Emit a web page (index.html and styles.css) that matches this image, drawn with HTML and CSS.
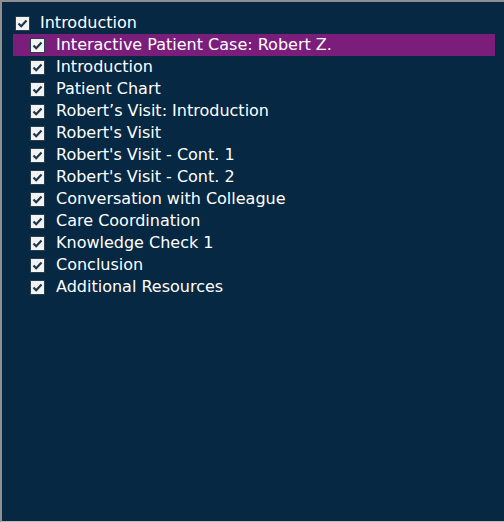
FILE: index.html
```html
<!DOCTYPE html>
<html>
<head>
<meta charset="utf-8">
<link rel="stylesheet" href="styles.css">
</head>
<body>
<div class="panel">
  <ul class="tree">
    <li class="node">
      <div class="row top">
        <span class="cb"><svg viewBox="0 0 15 15" width="15" height="15"><rect x="0.5" y="0.5" width="14" height="14" fill="#f3f3f3" stroke="#2b3e4c"/><path d="M3.5 7.5 L6.2 10.2 L11.5 4.6" fill="none" stroke="#1f3647" stroke-width="2.2"/></svg></span>
        <span class="label">Introduction</span>
      </div>
      <ul class="children">
        <li class="row child active"><span class="cb"><svg viewBox="0 0 15 15" width="15" height="15"><rect x="0.5" y="0.5" width="14" height="14" fill="#f3f3f3" stroke="#2b3e4c"/><path d="M3.5 7.5 L6.2 10.2 L11.5 4.6" fill="none" stroke="#1f3647" stroke-width="2.2"/></svg></span><span class="label">Interactive Patient Case: Robert Z.</span></li>
        <li class="row child"><span class="cb"><svg viewBox="0 0 15 15" width="15" height="15"><rect x="0.5" y="0.5" width="14" height="14" fill="#f3f3f3" stroke="#2b3e4c"/><path d="M3.5 7.5 L6.2 10.2 L11.5 4.6" fill="none" stroke="#1f3647" stroke-width="2.2"/></svg></span><span class="label">Introduction</span></li>
        <li class="row child"><span class="cb"><svg viewBox="0 0 15 15" width="15" height="15"><rect x="0.5" y="0.5" width="14" height="14" fill="#f3f3f3" stroke="#2b3e4c"/><path d="M3.5 7.5 L6.2 10.2 L11.5 4.6" fill="none" stroke="#1f3647" stroke-width="2.2"/></svg></span><span class="label">Patient Chart</span></li>
        <li class="row child"><span class="cb"><svg viewBox="0 0 15 15" width="15" height="15"><rect x="0.5" y="0.5" width="14" height="14" fill="#f3f3f3" stroke="#2b3e4c"/><path d="M3.5 7.5 L6.2 10.2 L11.5 4.6" fill="none" stroke="#1f3647" stroke-width="2.2"/></svg></span><span class="label">Robert’s Visit: Introduction</span></li>
        <li class="row child"><span class="cb"><svg viewBox="0 0 15 15" width="15" height="15"><rect x="0.5" y="0.5" width="14" height="14" fill="#f3f3f3" stroke="#2b3e4c"/><path d="M3.5 7.5 L6.2 10.2 L11.5 4.6" fill="none" stroke="#1f3647" stroke-width="2.2"/></svg></span><span class="label">Robert's Visit</span></li>
        <li class="row child"><span class="cb"><svg viewBox="0 0 15 15" width="15" height="15"><rect x="0.5" y="0.5" width="14" height="14" fill="#f3f3f3" stroke="#2b3e4c"/><path d="M3.5 7.5 L6.2 10.2 L11.5 4.6" fill="none" stroke="#1f3647" stroke-width="2.2"/></svg></span><span class="label">Robert's Visit - Cont. 1</span></li>
        <li class="row child"><span class="cb"><svg viewBox="0 0 15 15" width="15" height="15"><rect x="0.5" y="0.5" width="14" height="14" fill="#f3f3f3" stroke="#2b3e4c"/><path d="M3.5 7.5 L6.2 10.2 L11.5 4.6" fill="none" stroke="#1f3647" stroke-width="2.2"/></svg></span><span class="label">Robert's Visit - Cont. 2</span></li>
        <li class="row child"><span class="cb"><svg viewBox="0 0 15 15" width="15" height="15"><rect x="0.5" y="0.5" width="14" height="14" fill="#f3f3f3" stroke="#2b3e4c"/><path d="M3.5 7.5 L6.2 10.2 L11.5 4.6" fill="none" stroke="#1f3647" stroke-width="2.2"/></svg></span><span class="label">Conversation with Colleague</span></li>
        <li class="row child"><span class="cb"><svg viewBox="0 0 15 15" width="15" height="15"><rect x="0.5" y="0.5" width="14" height="14" fill="#f3f3f3" stroke="#2b3e4c"/><path d="M3.5 7.5 L6.2 10.2 L11.5 4.6" fill="none" stroke="#1f3647" stroke-width="2.2"/></svg></span><span class="label">Care Coordination</span></li>
        <li class="row child"><span class="cb"><svg viewBox="0 0 15 15" width="15" height="15"><rect x="0.5" y="0.5" width="14" height="14" fill="#f3f3f3" stroke="#2b3e4c"/><path d="M3.5 7.5 L6.2 10.2 L11.5 4.6" fill="none" stroke="#1f3647" stroke-width="2.2"/></svg></span><span class="label">Knowledge Check 1</span></li>
        <li class="row child"><span class="cb"><svg viewBox="0 0 15 15" width="15" height="15"><rect x="0.5" y="0.5" width="14" height="14" fill="#f3f3f3" stroke="#2b3e4c"/><path d="M3.5 7.5 L6.2 10.2 L11.5 4.6" fill="none" stroke="#1f3647" stroke-width="2.2"/></svg></span><span class="label">Conclusion</span></li>
        <li class="row child"><span class="cb"><svg viewBox="0 0 15 15" width="15" height="15"><rect x="0.5" y="0.5" width="14" height="14" fill="#f3f3f3" stroke="#2b3e4c"/><path d="M3.5 7.5 L6.2 10.2 L11.5 4.6" fill="none" stroke="#1f3647" stroke-width="2.2"/></svg></span><span class="label">Additional Resources</span></li>
      </ul>
    </li>
  </ul>
</div>
</body>
</html>
```

FILE: styles.css
```css
html, body {
  margin: 0;
  padding: 0;
  background: #062843;
}

.panel {
  box-sizing: border-box;
  width: 504px;
  height: 522px;
  background: #062843;
  border-top: 2px solid #8f8f8f;
  border-left: 2px solid #8f8f8f;
  border-bottom: 1px solid #b8b8b8;
  padding: 10px 9px 0 11px;
  font-family: "DejaVu Sans", Verdana, sans-serif;
  font-size: 16px;
  color: #ffffff;
}

.tree, .children {
  list-style: none;
  margin: 0;
  padding: 0;
}

.row {
  display: flex;
  align-items: center;
  height: 22px;
  white-space: nowrap;
}

.row.top {
  padding-left: 2px;
  gap: 10px;
}

.row.child {
  padding-left: 17px;
  gap: 11px;
}

.row.active {
  background: #7b1e7b;
}

.cb {
  display: flex;
  width: 15px;
  height: 15px;
}

.cb svg {
  display: block;
}

.label {
  line-height: 22px;
}
```
